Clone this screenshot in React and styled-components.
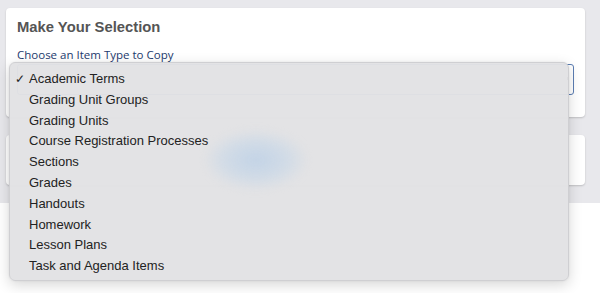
import React from "react";
import styled, { createGlobalStyle } from "styled-components";

const Global = createGlobalStyle`
  html, body { margin: 0; padding: 0; background: #ffffff; }
  body { width: 600px; height: 293px; overflow: hidden; font-family: "Liberation Sans", Arial, sans-serif; }
`;

const Page = styled.div`
  position: relative;
  width: 600px;
  height: 293px;
`;

const Backdrop = styled.div`
  background: #e8e8ec;
  padding: 8px 15px 18px 6px;
  display: flex;
  flex-direction: column;
  gap: 18px;
`;

const Card = styled.div`
  background: #ffffff;
  border-radius: 4px;
  box-shadow: 0 1px 2px rgba(0, 0, 0, 0.18);
  height: ${(p) => p.$h}px;
  box-sizing: border-box;
  padding: 10px 11px 0 11px;
`;

const Title = styled.h2`
  margin: 0;
  font-family: "Liberation Sans", Arial, sans-serif;
  font-weight: 700;
  font-size: 14.8px;
  line-height: 18px;
  color: #555555;
`;

const Label = styled.div`
  margin-top: 12px;
  font-family: "Open Sans", sans-serif;
  font-size: 11.5px;
  line-height: 14px;
  color: #1d3b6e;
`;

const Select = styled.div`
  margin-top: 2px;
  height: 31px;
  box-sizing: border-box;
  border: 1px solid #5b7db3;
  border-radius: 3px;
  display: flex;
  justify-content: flex-end;
  align-items: center;
  padding-right: 4px;
`;

const Arrow = styled.span`
  width: 2px;
  height: 3px;
  background: #333;
  margin-top: -2px;
`;

const Blob = styled.div`
  position: absolute;
  left: 196px;
  top: 68px;
  width: 100px;
  height: 58px;
  border-radius: 50%;
  background: radial-gradient(ellipse at center, rgba(192, 210, 230, 0.95) 0%, rgba(202, 216, 231, 0.7) 45%, rgba(226, 226, 228, 0) 75%);
  filter: blur(4px);
  pointer-events: none;
`;

const Menu = styled.ul`
  position: absolute;
  left: 9px;
  top: 62px;
  width: 560px;
  height: 219px;
  box-sizing: border-box;
  margin: 0;
  padding: 6px 0 0 0;
  list-style: none;
  background: rgba(226, 226, 228, 0.97);
  border: 1px solid #cfcfd2;
  border-radius: 6px;
  box-shadow: 0 4px 14px rgba(0, 0, 0, 0.16), 0 0 2px rgba(0, 0, 0, 0.08);
  overflow: hidden;
`;

const Item = styled.li`
  position: relative;
  height: 20.8px;
  line-height: 20.8px;
  padding-left: 19px;
  font-family: "Liberation Sans", Arial, sans-serif;
  font-size: 13px;
  color: #222222;
  white-space: nowrap;
`;

const Check = styled.span`
  position: absolute;
  left: 5px;
  top: 0;
  font-size: 12px;
  color: #222;
`;

const items = [
  "Academic Terms",
  "Grading Unit Groups",
  "Grading Units",
  "Course Registration Processes",
  "Sections",
  "Grades",
  "Handouts",
  "Homework",
  "Lesson Plans",
  "Task and Agenda Items",
];

export default function App() {
  return (
    <Page>
      <Global />
      <Backdrop>
        <Card $h={109}>
          <Title>Make Your Selection</Title>
          <Label>Choose an Item Type to Copy</Label>
          <Select>
            <Arrow />
          </Select>
        </Card>
        <Card $h={50} />
      </Backdrop>
      <Menu>
        <Blob />
        {items.map((t, i) => (
          <Item key={t}>
            {i === 0 && <Check>✓</Check>}
            {t}
          </Item>
        ))}
      </Menu>
    </Page>
  );
}
